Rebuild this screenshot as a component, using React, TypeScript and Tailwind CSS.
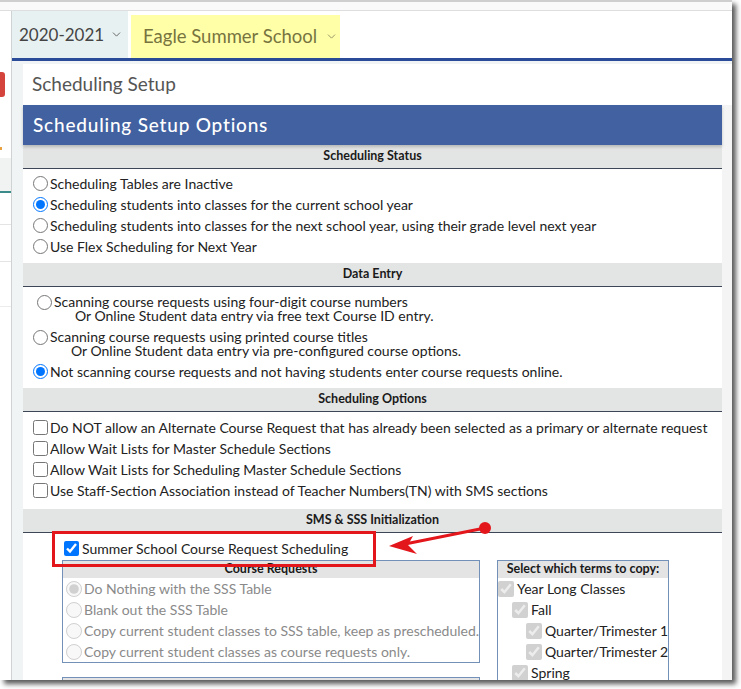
import React from "react";
import { ChevronDown } from "lucide-react";

function Radio({ checked = false, disabled = false, size = 15 }: { checked?: boolean; disabled?: boolean; size?: number }) {
  return (
    <input
      type="radio"
      defaultChecked={checked}
      disabled={disabled}
      className={size === 16 ? "w-[16px] h-[16px] shrink-0" : "w-[15px] h-[15px] shrink-0"}
    />
  );
}

function Check({ checked = false, disabled = false, size = 15 }: { checked?: boolean; disabled?: boolean; size?: number }) {
  return (
    <input
      type="checkbox"
      defaultChecked={checked}
      disabled={disabled}
      className={size === 16 ? "w-[16px] h-[16px] shrink-0" : "w-[15px] h-[15px] shrink-0"}
    />
  );
}

function SectionHeader({ title }: { title: string }) {
  return (
    <div className="h-[24px] bg-[#e3e4e4] border-b border-[#3c4656] flex items-center justify-center text-[12.5px] font-bold text-[#1a1a1a]">
      {title}
    </div>
  );
}

function RadioRow({ label, checked = false }: { label: string; checked?: boolean }) {
  return (
    <div className="h-[21px] flex items-center gap-[2px] whitespace-nowrap">
      <Radio checked={checked} />
      <span>{label}</span>
    </div>
  );
}

function CheckRow({ label }: { label: string }) {
  return (
    <div className="h-[21px] flex items-center gap-[2px] whitespace-nowrap">
      <Check />
      <span>{label}</span>
    </div>
  );
}

function TermRow({ label, level }: { label: string; level: number }) {
  const pad = level === 0 ? "pl-0" : level === 1 ? "pl-[14px]" : "pl-[28px]";
  return (
    <div className={`h-[21px] flex items-center gap-[3px] ${pad}`}>
      <Check checked disabled size={16} />
      <span className="whitespace-nowrap">{label}</span>
    </div>
  );
}

export default function App() {
  return (
    <div className="relative w-[741px] h-[689px] bg-white overflow-hidden font-['Lato',sans-serif] text-[14px] text-[#222]">
      {/* window */}
      <div className="w-[732px] h-[680px] bg-white flex flex-col overflow-hidden shadow-[4px_4px_5px_rgba(0,0,0,0.65)]">
        {/* top strip */}
        <div className="h-[11px] shrink-0 border-t-2 border-[#cfcfcf] bg-[#fafafa] border-b border-b-[#dedede]" />
        <div className="flex flex-1 min-h-0">
          {/* left sidebar fragment */}
          <div className="w-[12px] shrink-0 border-r border-[#cfd3d3] flex flex-col">
            <div className="h-[61px] shrink-0" />
            <div className="w-[5px] h-[25px] shrink-0 bg-[#d5433d] rounded-r-[3px]" />
            <div className="h-[50px] shrink-0" />
            <div className="w-[2px] h-[3px] shrink-0 bg-[#e8a040]" />
            <div className="h-[8px] shrink-0" />
            <div className="h-[35px] shrink-0 bg-[#f1f2f2] border-b-2 border-[#3b8c88]" />
            <div className="h-[31px] shrink-0" />
            <div className="h-[1px] shrink-0 bg-[#e4e4e4]" />
            <div className="h-[36px] shrink-0" />
            <div className="h-[1px] shrink-0 bg-[#e4e4e4]" />
            <div className="h-[44px] shrink-0" />
            <div className="h-[1px] shrink-0 bg-[#ececec]" />
          </div>

          {/* main */}
          <div className="flex-1 flex flex-col min-w-0">
            {/* header */}
            <div className="h-[47px] shrink-0 flex items-stretch">
              <div className="w-[116px] bg-[#e8f1f1] flex items-center pl-[7px] gap-[6px] text-[17px] text-[#444]">
                <span>2020-2021</span>
                <ChevronDown size={13} strokeWidth={1.6} className="text-[#555]" />
              </div>
              <div className="ml-[3px] mt-[4px] w-[209px] bg-[#ffffa8] flex items-center pl-[12px] gap-[8px] text-[18.5px] text-[#77743f]">
                <span>Eagle Summer School</span>
                <ChevronDown size={13} strokeWidth={1.6} className="text-[#8a8760]" />
              </div>
            </div>
            <div className="h-[3px] shrink-0 bg-[#2a4b97]" />

            {/* content */}
            <div className="flex-1 bg-[#f0f4f4] pl-[11px] pt-[3px] min-h-0">
              <div className="bg-white h-full flex flex-col">
                <div className="h-[41px] shrink-0 flex items-center pl-[9px] text-[19px] text-[#555]">Scheduling Setup</div>
                <div className="flex flex-1 min-h-0">
                  <div className="w-[699px] shrink-0">
                    <div className="h-[40px] bg-[#4261a0] flex items-center pl-[10px] text-white text-[19px] font-medium tracking-[0.8px] shadow-[0_2px_3px_rgba(0,0,0,0.2)] relative">
                      Scheduling Setup Options
                    </div>

                    <SectionHeader title="Scheduling Status" />
                    <div className="pl-[10px] pt-[4px] pb-[6px]">
                      <RadioRow label="Scheduling Tables are Inactive" />
                      <RadioRow label="Scheduling students into classes for the current school year" checked />
                      <RadioRow label="Scheduling students into classes for the next school year, using their grade level next year" />
                      <RadioRow label="Use Flex Scheduling for Next Year" />
                    </div>

                    <SectionHeader title="Data Entry" />
                    <div className="pl-[10px] pt-[8px] pb-[9px] leading-[14px] whitespace-nowrap">
                      <div className="flex items-start gap-[2px] pl-[4px]">
                        <Radio />
                        <div>
                          <div>Scanning course requests using four-digit course numbers</div>
                          <div className="pl-[21px]">Or Online Student data entry via free text Course ID entry.</div>
                        </div>
                      </div>
                      <div className="flex items-start gap-[2px] mt-[7px]">
                        <Radio />
                        <div>
                          <div>Scanning course requests using printed course titles</div>
                          <div className="pl-[21px]">Or Online Student data entry via pre-configured course options.</div>
                        </div>
                      </div>
                      <div className="flex items-center gap-[2px] mt-[6px]">
                        <Radio checked />
                        <div>Not scanning course requests and not having students enter course requests online.</div>
                      </div>
                    </div>

                    <SectionHeader title="Scheduling Options" />
                    <div className="pl-[10px] pt-[5px] pb-[8px]">
                      <CheckRow label="Do NOT allow an Alternate Course Request that has already been selected as a primary or alternate request" />
                      <CheckRow label="Allow Wait Lists for Master Schedule Sections" />
                      <CheckRow label="Allow Wait Lists for Scheduling Master Schedule Sections" />
                      <CheckRow label="Use Staff-Section Association instead of Teacher Numbers(TN) with SMS sections" />
                    </div>

                    <SectionHeader title="SMS & SSS Initialization" />
                    <div className="pl-[41px] pt-[5px] h-[20px] box-content flex items-center gap-[3px]">
                      <Check checked size={15} />
                      <span>Summer School Course Request Scheduling</span>
                    </div>

                    <div className="flex items-start pl-[39px] mt-[2px] gap-[17px]">
                      <div className="flex flex-col gap-[14px]">
                        <div className="w-[418px] border border-[#7390b8] text-[#8a8a8a]">
                          <div className="h-[17px] bg-[#e4e4e4] flex items-center justify-center text-[12.5px] font-bold text-[#1a1a1a]">
                            Course Requests
                          </div>
                          <div className="pl-[3px] whitespace-nowrap">
                            <div className="h-[21px] flex items-center gap-[2px]"><Radio checked disabled size={16} /><span>Do Nothing with the SSS Table</span></div>
                            <div className="h-[21px] flex items-center gap-[2px]"><Radio disabled size={16} /><span>Blank out the SSS Table</span></div>
                            <div className="h-[21px] flex items-center gap-[2px]"><Radio disabled size={16} /><span>Copy current student classes to SSS table, keep as prescheduled.</span></div>
                            <div className="h-[21px] flex items-center gap-[2px]"><Radio disabled size={16} /><span>Copy current student classes as course requests only.</span></div>
                          </div>
                        </div>
                        <div className="w-[418px] h-[40px] border border-[#7390b8]">
                          <div className="h-[17px] bg-[#e4e4e4]" />
                        </div>
                      </div>
                      <div className="w-[172px] border border-[#7390b8]">
                        <div className="h-[17px] bg-[#e4e4e4] flex items-center justify-center text-[12.5px] font-bold text-[#1a1a1a] whitespace-nowrap">
                          Select which terms to copy:
                        </div>
                        <TermRow label="Year Long Classes" level={0} />
                        <TermRow label="Fall" level={1} />
                        <TermRow label="Quarter/Trimester 1" level={2} />
                        <TermRow label="Quarter/Trimester 2" level={2} />
                        <TermRow label="Spring" level={1} />
                      </div>
                    </div>
                  </div>
                  <div className="flex-1 bg-[#f4f4f4]" />
                </div>
              </div>
            </div>
          </div>
        </div>
      </div>

      {/* annotation: red box */}
      <div className="absolute left-[52px] top-[531px] w-[324px] h-[36px] border-[3px] border-[#e3161b] pointer-events-none" />
      {/* annotation: arrow */}
      <svg className="absolute left-0 top-0 pointer-events-none" width="741" height="689" viewBox="0 0 741 689">
        <line x1="485" y1="528" x2="405" y2="544" stroke="#e3161b" strokeWidth="3" strokeLinecap="round" />
        <path d="M389 546 L413 536 L408 545 L417 554 Z" fill="#e3161b" />
        <circle cx="485" cy="528" r="6" fill="#e3161b" />
      </svg>
    </div>
  );
}
